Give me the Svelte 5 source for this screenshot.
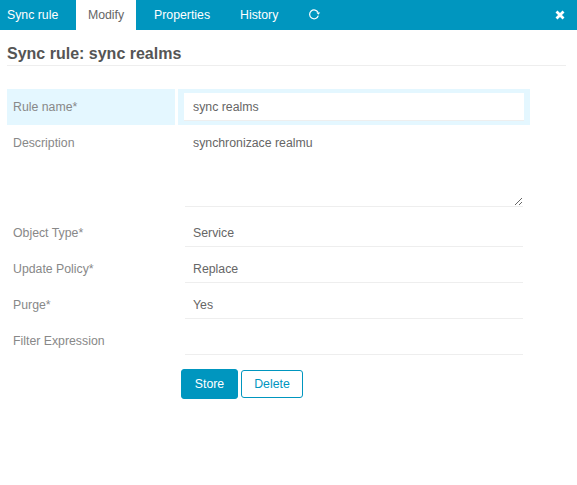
<script lang="ts">
	const tabs = ['Sync rule', 'Modify', 'Properties', 'History'];
	let active = $state('Modify');

	let ruleName = $state('sync realms');
	let description = $state('synchronizace realmu');
	let objectType = $state('Service');
	let updatePolicy = $state('Replace');
	let purge = $state('Yes');
	let filterExpression = $state('');
</script>

<div class="tabbar">
	<div class="tabs">
		{#each tabs as t}
			<button class="tab" class:active={active === t} onclick={() => (active = t)}>{t}</button>
		{/each}
		<button class="tab refresh" aria-label="Refresh">
			<svg width="12" height="12" viewBox="0 0 12 12">
				<path d="M9.1 4.6A4.4 4.4 0 1 0 9.3 7.6" fill="none" stroke="#fff" stroke-width="1.2" />
				<path d="M7.4 4.6h3.8L9.3 6.8z" fill="#fff" />
			</svg>
		</button>
	</div>
	<button class="close" aria-label="Close">
		<svg width="10" height="10" viewBox="0 0 10 10">
			<path d="M1.5 1.5l7 7M8.5 1.5l-7 7" stroke="#fff" stroke-width="2.8" />
		</svg>
	</button>
</div>

<div class="content">
	<h1>Sync rule: sync realms</h1>

	<form class="form" onsubmit={(e) => e.preventDefault()}>
		<div class="row focused">
			<label for="f-name">Rule name*</label>
			<div class="value"><input id="f-name" bind:value={ruleName} /></div>
		</div>
		<div class="row tall">
			<label for="f-desc">Description</label>
			<div class="value"><textarea id="f-desc" bind:value={description}></textarea></div>
		</div>
		<div class="row">
			<label for="f-type">Object Type*</label>
			<div class="value"><input id="f-type" bind:value={objectType} /></div>
		</div>
		<div class="row">
			<label for="f-policy">Update Policy*</label>
			<div class="value"><input id="f-policy" bind:value={updatePolicy} /></div>
		</div>
		<div class="row">
			<label for="f-purge">Purge*</label>
			<div class="value"><input id="f-purge" bind:value={purge} /></div>
		</div>
		<div class="row">
			<label for="f-filter">Filter Expression</label>
			<div class="value"><input id="f-filter" bind:value={filterExpression} /></div>
		</div>

		<div class="actions">
			<button class="btn primary" type="submit">Store</button>
			<button class="btn outline" type="button">Delete</button>
		</div>
	</form>
</div>

<style>
	:global(body) {
		background: #fff;
		font-family: 'Liberation Sans', Arial, sans-serif;
		font-size: 12.3px;
		color: #666;
	}
	.tabbar {
		display: flex;
		justify-content: space-between;
		align-items: stretch;
		height: 30px;
		background: #0096bf;
	}
	.tabs {
		display: flex;
	}
	.tab {
		display: block;
		height: 30px;
		padding: 0 15px;
		border: none;
		background: transparent;
		color: #fff;
		font: inherit;
		cursor: pointer;
	}
	.tab:first-child {
		width: 76px;
		padding: 0 0 0 7px;
		text-align: left;
	}
	.tab.active {
		width: 60px;
		background: #fff;
		color: #666;
		padding: 0;
		margin-right: 3px;
	}
	.refresh {
		padding-left: 16px;
	}
	.refresh svg {
		display: block;
		margin-top: -3px;
	}
	.close {
		border: none;
		background: transparent;
		padding: 0 12px 0 0;
		cursor: pointer;
	}
	.close svg {
		display: block;
	}
	.content {
		padding: 0 11px 0 7px;
	}
	h1 {
		margin: 14px 0 0;
		height: 21px;
		line-height: 20px;
		font-size: 16px;
		font-weight: 700;
		color: #555;
		border-bottom: 1px solid #eee;
	}
	.form {
		margin-top: 23px;
		width: 523px;
	}
	.row {
		display: grid;
		grid-template-columns: 168px 352px;
		column-gap: 3px;
		height: 36px;
	}
	.row.tall {
		height: 90px;
	}
	label {
		padding: 11px 6px 0;
		line-height: 14px;
		color: #888;
	}
	.value {
		padding: 4px 7px 0;
	}
	input,
	textarea {
		display: block;
		box-sizing: border-box;
		width: 338px;
		height: 28px;
		margin: 0;
		padding: 0 8px;
		border: none;
		border-bottom: 1px solid #eee;
		border-radius: 0;
		outline: none;
		background: #fff;
		color: #666;
		font: inherit;
	}
	textarea {
		height: 78px;
		padding: 7px 8px;
		line-height: 14px;
		resize: vertical;
	}
	.focused label,
	.focused .value {
		background: #e4f7ff;
	}
	.focused .value {
		padding: 4px 6px 0;
	}
	.focused input {
		width: 340px;
		padding: 0 9px;
	}
	.actions {
		display: flex;
		align-items: center;
		gap: 3px;
		margin: 10px 0 0 174px;
	}
	.btn {
		font: inherit;
		border-radius: 3px;
		cursor: pointer;
	}
	.primary {
		width: 57px;
		height: 30px;
		border: 1px solid #0096bf;
		background: #0096bf;
		color: #fff;
	}
	.outline {
		width: 62px;
		height: 28px;
		border: 1px solid #0096bf;
		background: #fff;
		color: #0096bf;
	}
</style>
